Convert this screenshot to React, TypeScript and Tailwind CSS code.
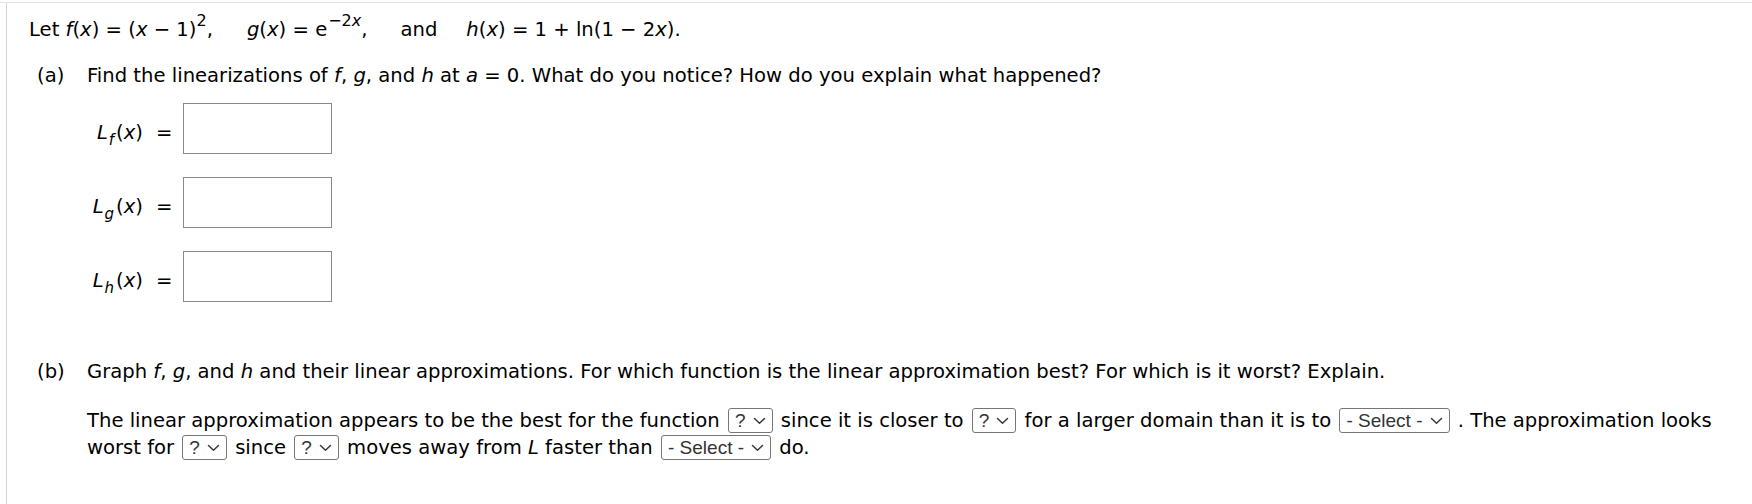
import React from "react";

function Chevron() {
  return (
    <svg width="13" height="8" viewBox="0 0 13 8" className="ml-[7px] shrink-0">
      <polyline
        points="1.5,1.5 6.5,6.3 11.5,1.5"
        fill="none"
        stroke="#3a3a3a"
        strokeWidth="1.5"
        strokeLinecap="round"
        strokeLinejoin="round"
      />
    </svg>
  );
}

function Pick({ label }: { label: string }) {
  return (
    <span className="mx-[2px] inline-flex h-[25px] items-center rounded-[3px] border border-[#767676] px-[6px] font-['Liberation_Sans',Arial,sans-serif] text-[19px] leading-none text-[#333]">
      <span>{label}</span>
      <Chevron />
    </span>
  );
}

function AnswerRow({ sub }: { sub: string }) {
  return (
    <div className="flex items-start">
      <span className="w-[56px] pt-[18px] text-right whitespace-nowrap">
        <i>L</i>
        <span className="ml-[1px] align-[-6px] text-[15px] leading-[0] italic">
          {sub}
        </span>
        <span className="ml-[2px]">
          (<i>x</i>)
        </span>
      </span>
      <span className="ml-[13px] pt-[18px]">=</span>
      <div className="ml-[11px] h-[51px] w-[149px] border border-[#8a8a8a] bg-white" />
    </div>
  );
}

export default function App() {
  return (
    <div className="min-h-[504px] bg-white pt-[2px] font-['DejaVu_Sans',Verdana,sans-serif] text-[19.6px] leading-[23px] text-black">
      <div className="border-t border-[#e2e2e2]">
        <div className="ml-[6px] min-h-[501px] border-l border-[#d4d4d4] pl-[22px] pt-[15px]">
          {/* statement */}
          <p className="whitespace-nowrap">
            Let <i>f</i>(<i>x</i>) = (<i>x</i> − 1)
            <span className="align-[10px] text-[16px] leading-[0]">2</span>,
            <span className="ml-[34px]">
              <i>g</i>(<i>x</i>) = e
              <span className="ml-[1px] align-[10px] text-[16px] leading-[0]">
                −2<i>x</i>
              </span>
              ,
            </span>
            <span className="ml-[33px]">and</span>
            <span className="ml-[29px]">
              <i>h</i>(<i>x</i>) = 1 + ln(1 − 2<i>x</i>).
            </span>
          </p>

          {/* part a */}
          <div className="mt-[23px] ml-[8px] flex">
            <span className="w-[50px] shrink-0">(a)</span>
            <div>
              <p>
                Find the linearizations of <i>f</i>, <i>g</i>, and <i>h</i> at{" "}
                <i>a</i> = 0. What do you notice? How do you explain what
                happened?
              </p>
              <div className="mt-[16px] flex flex-col gap-[23px]">
                <AnswerRow sub="f" />
                <AnswerRow sub="g" />
                <AnswerRow sub="h" />
              </div>
            </div>
          </div>

          {/* part b */}
          <div className="mt-[58px] ml-[8px] flex">
            <span className="w-[50px] shrink-0">(b)</span>
            <div>
              <p className="whitespace-nowrap">
                Graph <i>f</i>, <i>g</i>, and <i>h</i> and their linear
                approximations. For which function is the linear approximation
                best? For which is it worst? Explain.
              </p>
              <p className="mt-[24px] leading-[27px] whitespace-nowrap">
                The linear approximation appears to be the best for the function{" "}
                <Pick label="?" /> since it is closer to <Pick label="?" /> for a
                larger domain than it is to <Pick label="- Select -" /> . The
                approximation looks
                <br />
                worst for <Pick label="?" /> since <Pick label="?" /> moves away
                from <i>L</i> faster than <Pick label="- Select -" /> do.
              </p>
            </div>
          </div>
        </div>
      </div>
    </div>
  );
}
